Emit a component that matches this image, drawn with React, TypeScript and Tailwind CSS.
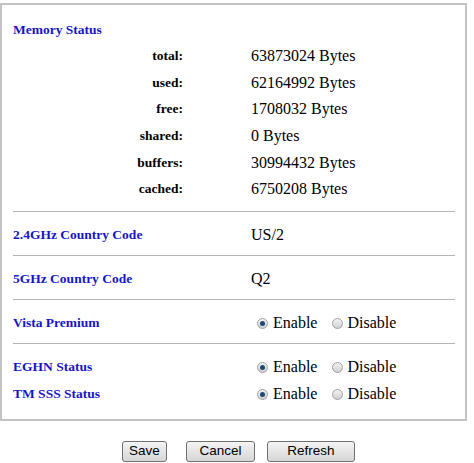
import React from 'react'

const serif = 'font-["Liberation_Serif","Times_New_Roman",serif]'

const memory = [
  ['total:', '63873024 Bytes'],
  ['used:', '62164992 Bytes'],
  ['free:', '1708032 Bytes'],
  ['shared:', '0 Bytes'],
  ['buffers:', '30994432 Bytes'],
  ['cached:', '6750208 Bytes'],
]

function Divider() {
  return <div className="ml-[11px] h-px w-[442px] bg-[#b4b4b4]" />
}

function Radio({ checked }: { checked: boolean }) {
  return (
    <span className="flex h-[11px] w-[11px] items-center justify-center rounded-full border border-[#a0a0a0] bg-gradient-to-b from-[#f4f4f4] to-[#d0d0d0]">
      {checked && <span className="h-[5px] w-[5px] rounded-full bg-[#1b4a74]" />}
    </span>
  )
}

function Toggle() {
  return (
    <div className="flex items-center text-[16px] text-black">
      <span className="ml-[6px]"><Radio checked /></span>
      <span className="ml-[5px]">Enable</span>
      <span className="ml-[15px]"><Radio checked={false} /></span>
      <span className="ml-[4px]">Disable</span>
    </div>
  )
}

function Label({ children }: { children: React.ReactNode }) {
  return <div className="w-[249px] pl-[11px] text-[13.5px] font-bold text-[#1616c6]">{children}</div>
}

function Section({ label, children }: { label: string; children: React.ReactNode }) {
  return (
    <div className="flex h-[43px] items-center pt-[4px]">
      <Label>{label}</Label>
      {children}
    </div>
  )
}

function Button({ label, className }: { label: string; className: string }) {
  return (
    <button
      className={`h-[21px] rounded-[3px] border border-[#707070] bg-gradient-to-b from-[#f4f4f4] to-[#d6d6d6] font-["Liberation_Sans",Arial,sans-serif] text-[13.5px] leading-none text-black ${className}`}
    >
      {label}
    </button>
  )
}

export default function App() {
  return (
    <div className={`h-[463px] w-[474px] bg-white ${serif}`}>
      <div className="mt-[3px] w-[467px] border-2 border-[#c3c3c3]">
        <div className="flex h-[26px] items-center pt-[12px] box-content">
          <Label>Memory Status</Label>
        </div>
        {memory.map(([label, value]) => (
          <div key={label} className="flex h-[26.6px] items-center">
            <div className="w-[181px] text-right text-[13.5px] font-bold text-black">{label}</div>
            <div className="pl-[68px] text-[16px] text-black">{value}</div>
          </div>
        ))}
        <div className="mt-[8px]" />
        <Divider />
        <Section label="2.4GHz Country Code">
          <div className="text-[16px] text-black">US/2</div>
        </Section>
        <Divider />
        <Section label="5GHz Country Code">
          <div className="text-[16px] text-black">Q2</div>
        </Section>
        <Divider />
        <Section label="Vista Premium">
          <Toggle />
        </Section>
        <Divider />
        <div className="pb-[11px] pt-[10px]">
          <div className="flex h-[27px] items-center">
            <Label>EGHN Status</Label>
            <Toggle />
          </div>
          <div className="flex h-[27px] items-center">
            <Label>TM SSS Status</Label>
            <Toggle />
          </div>
        </div>
      </div>
      <div className="mt-[20px] flex pl-[122px]">
        <Button label="Save" className="w-[45px]" />
        <Button label="Cancel" className="ml-[19px] w-[69px]" />
        <Button label="Refresh" className="ml-[12px] w-[88px]" />
      </div>
    </div>
  )
}
